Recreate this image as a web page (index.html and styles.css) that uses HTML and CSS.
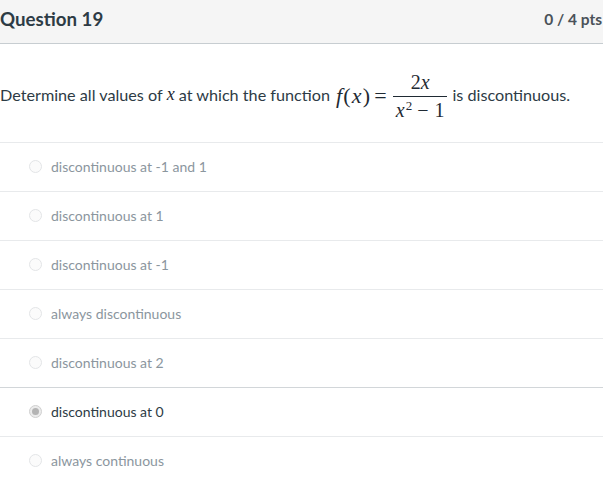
FILE: index.html
```html
<!DOCTYPE html>
<html>
<head>
  <meta charset="UTF-8">
  <link rel="stylesheet" href="styles.css">
</head>
<body>
  <div class="question">
    <div class="question-header">
      <div class="question-title">Question 19</div>
      <div class="question-points">0 / 4 pts</div>
    </div>

    <div class="question-text">
      <span>Determine all values of</span>
      <span class="math var"><i>x</i></span>
      <span>at which the function</span>
      <span class="math formula">
        <span class="fx"><i>f</i>(<i>x</i>)</span><span class="eq">=</span>
        <span class="frac">
          <span class="num">2<i>x</i></span>
          <span class="den"><i>x</i><sup>2</sup><span class="minus">&minus;</span>1</span>
        </span>
      </span>
      <span>is discontinuous.</span>
    </div>

    <div class="answers">
      <div class="answer"><span class="radio"></span>discontinuous at -1 and 1</div>
      <div class="answer"><span class="radio"></span>discontinuous at 1</div>
      <div class="answer"><span class="radio"></span>discontinuous at -1</div>
      <div class="answer"><span class="radio"></span>always discontinuous</div>
      <div class="answer"><span class="radio"></span>discontinuous at 2</div>
      <div class="answer selected"><span class="radio"></span>discontinuous at 0</div>
      <div class="answer"><span class="radio"></span>always continuous</div>
    </div>
  </div>
</body>
</html>
```

FILE: styles.css
```css
* {
  margin: 0;
  padding: 0;
  box-sizing: border-box;
}

body {
  font-family: Lato, 'Open Sans', sans-serif;
  color: #2d3b45;
  background: #ffffff;
}

.question {
  width: 603px;
}

.question-header {
  height: 44px;
  background: #f5f5f5;
  border-bottom: 1px solid #c7cdd1;
  display: flex;
  justify-content: space-between;
  align-items: center;
  padding: 0 1px 5px 0;
}

.question-title {
  font-size: 18.7px;
  font-weight: 700;
}

.question-points {
  font-size: 15.5px;
  font-weight: 700;
  color: #4a5259;
}

.question-text {
  height: 98px;
  display: flex;
  align-items: center;
  font-size: 16.2px;
  padding-top: 3px;
  white-space: nowrap;
}

.math {
  font-family: 'Liberation Serif', serif;
  color: #1f2a33;
}

.math i {
  font-style: italic;
}

.var {
  font-size: 18px;
  margin: 0 4px;
}

.formula {
  display: inline-flex;
  align-items: center;
  margin: 0 5px 0 6px;
}

.fx {
  font-size: 22px;
  letter-spacing: 1.2px;
  margin-top: 2px;
}

.eq {
  font-size: 22px;
  margin: 2px 6px 0 3px;
}

.frac {
  display: inline-flex;
  flex-direction: column;
  align-items: center;
  font-size: 20px;
  margin-top: 2px;
}

.num {
  width: 100%;
  text-align: center;
  line-height: 20px;
  padding-bottom: 4px;
  border-bottom: 1px solid #1f2a33;
}

.den {
  padding: 3px 3px 0;
  line-height: 20px;
}

.den sup {
  font-size: 13px;
  vertical-align: 7px;
  line-height: 0;
  margin-left: 1px;
}

.minus {
  margin: 0 6px 0 5px;
}

.answer {
  height: 49px;
  border-top: 1px solid #e8eaec;
  display: flex;
  align-items: center;
  padding-left: 29px;
  padding-bottom: 1px;
  font-size: 14px;
  color: #8b969e;
}

.answer.selected {
  color: #2d3b45;
}

.answer:nth-child(6) {
  border-top-color: #d2d6d9;
}

.radio {
  width: 13px;
  height: 13px;
  border-radius: 50%;
  border: 1px solid #e3e5e7;
  background: #fbfbfb;
  margin-right: 9px;
  display: flex;
  align-items: center;
  justify-content: center;
}

.selected .radio {
  border-color: #d0d0d0;
  background: #ececec;
}

.selected .radio::after {
  content: '';
  width: 7px;
  height: 7px;
  border-radius: 50%;
  background: #b4b4b4;
}
```
